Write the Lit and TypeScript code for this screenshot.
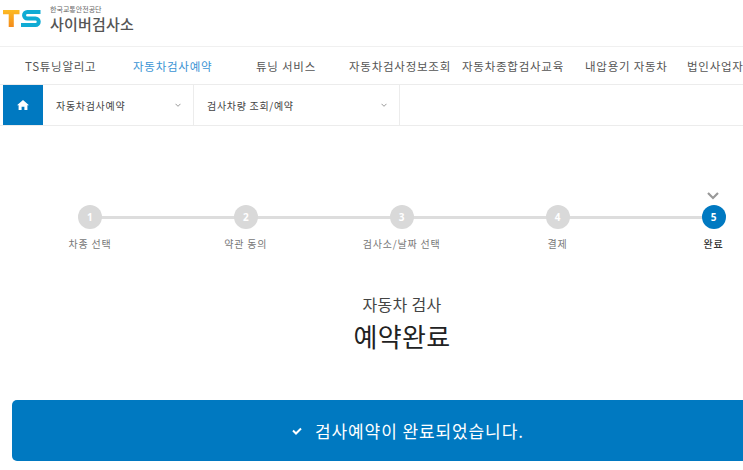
import { LitElement, html, css, svg } from "lit";
import { customElement } from "lit/decorators.js";

const chevron = svg`<path d="M.5.800l2.500 2.500L5.500.800" fill="none" stroke="#999" stroke-width="1"/>`;

@customElement("app-root")
export class AppRoot extends LitElement {
  static styles = css`
    :host { display: block; width: 743px; height: 470px; overflow: hidden; background: #fff; color: #555; font-family: "Noto Sans CJK KR", "Noto Sans", sans-serif; }
    .top { height: 42px; border-bottom: 1px solid #f0f0f0; display: flex; align-items: flex-start; padding: 4px 0 0 3px; gap: 9px; }
    .logo { width: 38px; height: 17px; margin-top: 6px; flex: none; }
    .brand { display: flex; flex-direction: column; }
    .brand small { font-size: 7px; line-height: 10px; color: #666; }
    .brand b { font-size: 15px; line-height: 19px; font-weight: 500; letter-spacing: 0.2px; color: #555; }
    nav { height: 37px; border-bottom: 1px solid #ececec; display: flex; align-items: center; white-space: nowrap; font-size: 11.5px; letter-spacing: 0.75px; color: #555; padding-left: 25px; }
    nav a { flex: none; }
    nav a.on { color: #3b94d4; }
    .crumbs { height: 40px; border-bottom: 1px solid #ececec; display: flex; padding-left: 3px; font-size: 10px; letter-spacing: 0.7px; color: #444; }
    .home { width: 40px; background: #0079c1; display: flex; align-items: center; justify-content: center; flex: none; }
    .crumb { display: flex; align-items: center; justify-content: space-between; border-right: 1px solid #ececec; box-sizing: border-box; padding: 0 12px 0 13px; }
    .crumb.a { width: 151px; }
    .crumb.b { width: 206px; }
    main { width: 780px; margin-left: 12px; }
    .steps { display: grid; grid-template-columns: repeat(5, 155.900px); margin-top: 65px; height: 62px; }
    .step { position: relative; display: flex; flex-direction: column; align-items: center; padding-top: 14px; font-size: 10px; letter-spacing: 0.8px; color: #777; }
    .step:not(:last-child)::after { content: ""; position: absolute; left: 78px; top: 25px; width: 156px; height: 3px; background: #ddd; }
    .dot { position: relative; z-index: 1; width: 24px; height: 24px; border-radius: 50%; background: #d9d9d9; color: #fff; font: 700 10px/24px "Noto Sans", sans-serif; text-align: center; letter-spacing: 0; }
    .step label { margin-top: 8px; line-height: 14px; }
    .step.cur { color: #333; font-weight: 500; }
    .step.cur .dot { background: #0079c1; }
    .tick { position: absolute; top: 0; left: 71px; }
    hgroup { text-align: center; margin-top: 41px; }
    hgroup p { margin: 0; font-size: 16px; letter-spacing: 0.3px; line-height: 20px; color: #444; }
    hgroup h1 { margin: 3px 0 0; font-size: 26px; letter-spacing: 0.3px; font-weight: 400; line-height: 38px; color: #222; }
    .banner { margin-top: 45px; height: 61px; background: #0079c1; border-radius: 5px; color: #fff; display: flex; align-items: center; font-size: 17px; letter-spacing: 0.9px; padding-left: 280px; gap: 13px; box-sizing: border-box; }
  `;

  render() {
    const nav: [string, number, boolean?][] = [
      ["TS튜닝알리고", 108],
      ["자동차검사예약", 123, true],
      ["튜닝 서비스", 93],
      ["자동차검사정보조회", 113],
      ["자동차종합검사교육", 123],
      ["내압용기 자동차", 102],
      ["법인사업자", 80],
    ];
    const steps = ["차종 선택", "약관 동의", "검사소/날짜 선택", "결제", "완료"];
    return html`
      <div class="top">
        <svg class="logo" viewBox="0 0 38 17" aria-hidden="true">
          <defs>
            <linearGradient id="t" x1="0" y1="0" x2="0" y2="1"><stop offset="0" stop-color="#fdbb24"/><stop offset="1" stop-color="#f38b1b"/></linearGradient>
          </defs>
          <path d="M0 0h16.500v4.200H10.800V17H5.700V4.200H0z" fill="url(#t)"/>
          <path d="M37.500 2H24.300a3.250 3.250 0 0 0 0 6.500h8.200a3.250 3.250 0 0 1 0 6.500H18" fill="none" stroke="#10abd4" stroke-width="4"/>
        </svg>
        <div class="brand"><small>한국교통안전공단</small><b>사이버검사소</b></div>
      </div>
      <nav>
        ${nav.map(([t, w, on]) => html`<a class=${on ? "on" : ""} style="width:${w}px">${t}</a>`)}
      </nav>
      <div class="crumbs">
        <div class="home">
          <svg width="12" height="10" viewBox="0 0 12 10"><path d="M6 0L0 5.300h1.600V10h3V6.800h2.800V10h3V5.300H12z" fill="#fff"/></svg>
        </div>
        <div class="crumb a"><span>자동차검사예약</span><svg width="6" height="4" viewBox="0 0 6 4">${chevron}</svg></div>
        <div class="crumb b"><span>검사차량 조회/예약</span><svg width="6" height="4" viewBox="0 0 6 4">${chevron}</svg></div>
      </div>
      <main>
        <div class="steps">
          ${steps.map((s, i) => html`
            <div class="step ${i === 4 ? "cur" : ""}">
              ${i === 4 ? html`<svg class="tick" width="12" height="9" viewBox="0 0 12 9"><path d="M1 2l5 5 5-5" fill="none" stroke="#999" stroke-width="2.200"/></svg>` : ""}
              <div class="dot">${i + 1}</div>
              <label>${s}</label>
            </div>`)}
        </div>
        <hgroup><p>자동차 검사</p><h1>예약완료</h1></hgroup>
        <div class="banner">
          <svg width="10" height="8" viewBox="0 0 10 8"><path d="M1 3.500l3 3 5-5" fill="none" stroke="#fff" stroke-width="2"/></svg>
          <span>검사예약이 완료되었습니다.</span>
        </div>
      </main>
    `;
  }
}
